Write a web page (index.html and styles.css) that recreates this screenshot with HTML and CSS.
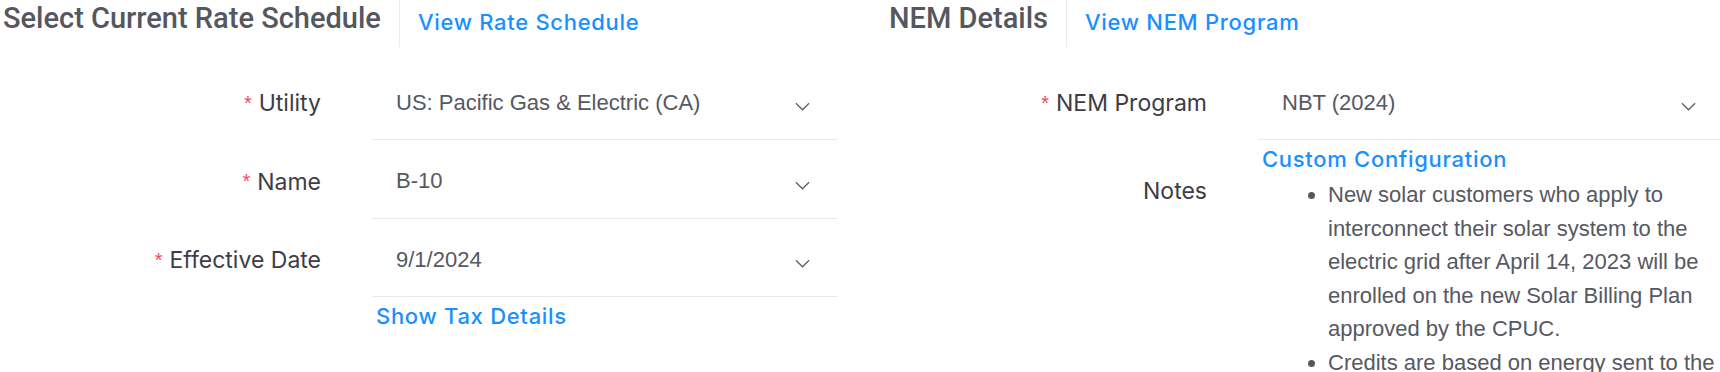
FILE: index.html
```html
<!DOCTYPE html>
<html lang="en">
<head>
    <meta charset="UTF-8">
    <meta name="viewport" content="width=device-width, initial-scale=1.0">
    <title>Rate Schedule</title>
    <link rel="stylesheet" href="styles.css">
</head>
<body>
    <div class="page">
        <!-- Rate schedule -->
        <section class="panel">
            <div class="panel-head">
                <h2 class="panel-title">Select Current Rate Schedule</h2>
                <span class="head-divider"></span>
                <a class="link head-link" href="#">View Rate Schedule</a>
            </div>

            <div class="form-row">
                <label class="form-label"><span class="req">*</span>Utility</label>
                <div class="select">
                    <span class="select-value">US: Pacific Gas &amp; Electric (CA)</span>
                    <svg class="chevron" viewBox="0 0 16 9"><path d="M1 1l7 7 7-7"/></svg>
                </div>
            </div>

            <div class="form-row">
                <label class="form-label"><span class="req">*</span>Name</label>
                <div class="select">
                    <span class="select-value">B-10</span>
                    <svg class="chevron" viewBox="0 0 16 9"><path d="M1 1l7 7 7-7"/></svg>
                </div>
            </div>

            <div class="form-row">
                <label class="form-label"><span class="req">*</span>Effective Date</label>
                <div class="select">
                    <span class="select-value">9/1/2024</span>
                    <svg class="chevron" viewBox="0 0 16 9"><path d="M1 1l7 7 7-7"/></svg>
                </div>
            </div>

            <div class="form-row">
                <span class="form-label"></span>
                <a class="link sub-link" href="#">Show Tax Details</a>
            </div>
        </section>

        <!-- NEM -->
        <section class="panel">
            <div class="panel-head">
                <h2 class="panel-title">NEM Details</h2>
                <span class="head-divider"></span>
                <a class="link head-link" href="#">View NEM Program</a>
            </div>

            <div class="form-row">
                <label class="form-label"><span class="req">*</span>NEM Program</label>
                <div class="select">
                    <span class="select-value">NBT (2024)</span>
                    <svg class="chevron" viewBox="0 0 16 9"><path d="M1 1l7 7 7-7"/></svg>
                </div>
            </div>

            <div class="form-row">
                <span class="form-label"></span>
                <a class="link sub-link" href="#">Custom Configuration</a>
            </div>

            <div class="form-row notes-row">
                <label class="form-label notes-label">Notes</label>
                <ul class="notes">
                    <li>New solar customers who apply to interconnect their solar system to the electric grid after April 14, 2023 will be enrolled on the new Solar Billing Plan approved by the CPUC.</li>
                    <li>Credits are based on energy sent to the grid at the time it is exported, valued by the avoided cost calculator.</li>
                </ul>
            </div>
        </section>
    </div>
</body>
</html>
```

FILE: styles.css
```css
body {
    margin: 0;
    background-color: #ffffff;
    font-family: "Liberation Sans", Arial, sans-serif;
    overflow: hidden;
}

.page {
    display: grid;
    grid-template-columns: 886px 1fr;
    padding-left: 3px;
}

.panel-head {
    display: flex;
    align-items: flex-start;
    height: 61.5px;
}

.panel-title {
    margin: 0 18px 0 0;
    font-family: Roboto, sans-serif;
    font-weight: 500;
    font-size: 29px;
    line-height: 36px;
    color: #55575f;
}

.head-divider {
    width: 1px;
    height: 47px;
    background-color: #ebebef;
}

.link {
    font-family: Inter, sans-serif;
    font-weight: 500;
    letter-spacing: 0.7px;
    color: #1890ff;
    text-decoration: none;
}

.head-link {
    margin: 7px 0 0 18px;
    font-size: 22px;
    line-height: 30px;
}

.form-row {
    display: grid;
    grid-template-columns: 318px 465px;
    column-gap: 51px;
}

.form-label {
    display: flex;
    align-items: center;
    justify-content: flex-end;
    padding-top: 5px;
    font-family: Inter, sans-serif;
    font-size: 23px;
    color: #3d3d45;
}

.req {
    margin-right: 7px;
    font-family: "Liberation Sans", sans-serif;
    font-size: 20px;
    color: #f5475f;
}

.select {
    display: flex;
    align-items: center;
    justify-content: space-between;
    height: 78.5px;
    box-sizing: border-box;
    padding: 5px 27px 0 24px;
    border-bottom: 1px solid #e8e8ee;
}

.select-value {
    font-size: 22px;
    color: #565862;
}

.chevron {
    width: 15px;
    height: 9px;
    margin-top: 8px;
    fill: none;
    stroke: #5a5d66;
    stroke-width: 1.3;
}

.sub-link {
    justify-self: start;
    padding-left: 4px;
    font-size: 22px;
    line-height: 38px;
}

.notes-label {
    align-items: flex-start;
    padding-top: 0;
    line-height: 26px;
}

.notes {
    margin: 0;
    padding-left: 70px;
    font-size: 22px;
    line-height: 33.5px;
    color: #565862;
}
```
